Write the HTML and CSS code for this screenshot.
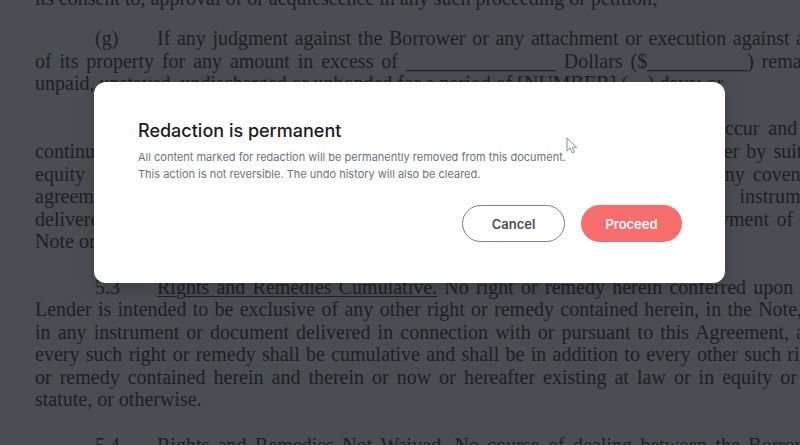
FILE: index.html
```html
<!DOCTYPE html>
<html lang="en">
  <head>
    <meta charset="UTF-8" />
    <meta name="viewport" content="width=device-width, initial-scale=1.0" />
    <title>Redaction</title>
    <link rel="stylesheet" href="styles.css">
  </head>
  <body>
    <div class="viewer">
      <div class="doc">
        <p class="para top">
          <span class="ln last">its consent to, approval of or acquiescence in any such proceeding or petition;</span>
        </p>
        <p class="para">
          <span class="ln lead"><span class="num">(g)</span>If any judgment against the Borrower or any attachment or execution against any</span>
          <span class="ln">of its property for any amount in excess of _______________ Dollars ($__________) remains</span>
          <span class="ln last">unpaid, unstayed, undischarged or unbonded for a period of [NUMBER] (__) days; or</span>
        </p>
        <p class="para">
          <span class="ln lead"><span class="num">5.2</span>Remedies. If any of the Events of Default described above shall occur and be</span>
          <span class="ln">continuing, the Lender may proceed to protect and enforce its rights hereunder either by suit in</span>
          <span class="ln">equity and/or by action at law, or both, whether for the specific performance of any covenant</span>
          <span class="ln">agreement contained in this Agreement or in the Note or in any other instrument</span>
          <span class="ln">delivered pursuant hereto, or in aid of any power granted hereby, or to enforce payment of the</span>
          <span class="ln last">Note or any other legal or equitable right.</span>
        </p>
        <p class="para">
          <span class="ln lead"><span class="num">5.3</span><u>Rights and Remedies Cumulative.</u> No right or remedy herein conferred upon the</span>
          <span class="ln">Lender is intended to be exclusive of any other right or remedy contained herein, in the Note, or</span>
          <span class="ln">in any instrument or document delivered in connection with or pursuant to this Agreement, and</span>
          <span class="ln">every such right or remedy shall be cumulative and shall be in addition to every other such right</span>
          <span class="ln">or remedy contained herein and therein or now or hereafter existing at law or in equity or by</span>
          <span class="ln last">statute, or otherwise.</span>
        </p>
        <p class="para">
          <span class="ln lead"><span class="num">5.4</span><u>Rights and Remedies Not Waived.</u> No course of dealing between the Borrower</span>
        </p>
      </div>

      <div class="modal">
        <h2 class="modal-title">Redaction is permanent</h2>
        <p class="modal-text">All content marked for redaction will be permanently removed from this document.<br>This action is not reversible. The undo history will also be cleared.</p>
        <div class="modal-buttons">
          <button class="btn btn-cancel">Cancel</button>
          <button class="btn btn-proceed">Proceed</button>
        </div>
      </div>

      <svg class="cursor" width="12" height="17" viewBox="0 0 12 17">
        <path d="M1 1 L1 14 L4.2 11 L6.4 16 L8.4 15.1 L6.3 10.3 L10.6 10.3 Z" fill="#fff" stroke="#8a8d92" stroke-width="1" stroke-linejoin="round" />
      </svg>
    </div>
  </body>
</html>
```

FILE: styles.css
```css
* {
  padding: 0;
  margin: 0;
  border: 0;
  box-sizing: border-box;
}
html,
body {
  width: 100%;
  height: 100%;
  overflow: hidden;
}
body {
  background-color: #4a4d51;
}
button {
  font-family: inherit;
  cursor: pointer;
}
/* -------------- */
.viewer {
  position: relative;
  width: 800px;
  height: 445px;
  overflow: hidden;
}

.doc {
  width: 860px;
  padding: 0 35px;
  font-family: "Liberation Serif", "Times New Roman", serif;
  font-size: 20px;
  line-height: 22.6px;
  color: #1e2023;
}

.para {
  margin-bottom: 22.6px;
}

.para.top {
  margin-top: -13px;
  margin-bottom: 17.4px;
}

.ln {
  display: block;
  text-align: justify;
  text-align-last: justify;
}

.ln.last {
  text-align-last: left;
}

.ln.lead {
  padding-left: 60px;
}

.num {
  display: inline-block;
  width: 62px;
  text-align-last: left;
}

.ln u {
  text-decoration-thickness: 1px;
  text-underline-offset: 2px;
}

.modal {
  position: absolute;
  left: 94px;
  top: 82px;
  width: 631px;
  height: 201px;
  padding: 37px 43px 41px 44px;
  background-color: #fff;
  border-radius: 12px;
  box-shadow: 0 4px 18px rgba(0, 0, 0, 0.18);
  display: flex;
  flex-direction: column;
  font-family: Inter, "Noto Sans", sans-serif;
}

.modal-title {
  font-size: 18px;
  line-height: 23px;
  font-weight: 500;
  color: #1b1c1e;
}

.modal-text {
  margin-top: 6.5px;
  font-size: 11px;
  line-height: 17px;
  color: #6e7277;
}

.modal-buttons {
  margin-top: auto;
  display: flex;
  justify-content: flex-end;
  gap: 16px;
}

.btn {
  height: 37px;
  border-radius: 100px;
  font-size: 13px;
  font-weight: 600;
  display: flex;
  align-items: center;
  justify-content: center;
}

.btn-cancel {
  width: 103px;
  background-color: #fff;
  border: 1.5px solid #7b7f85;
  color: #4b4f56;
}

.btn-proceed {
  width: 101px;
  background-color: #f76c6c;
  color: #fff;
}

.cursor {
  position: absolute;
  left: 566px;
  top: 137px;
}
```
